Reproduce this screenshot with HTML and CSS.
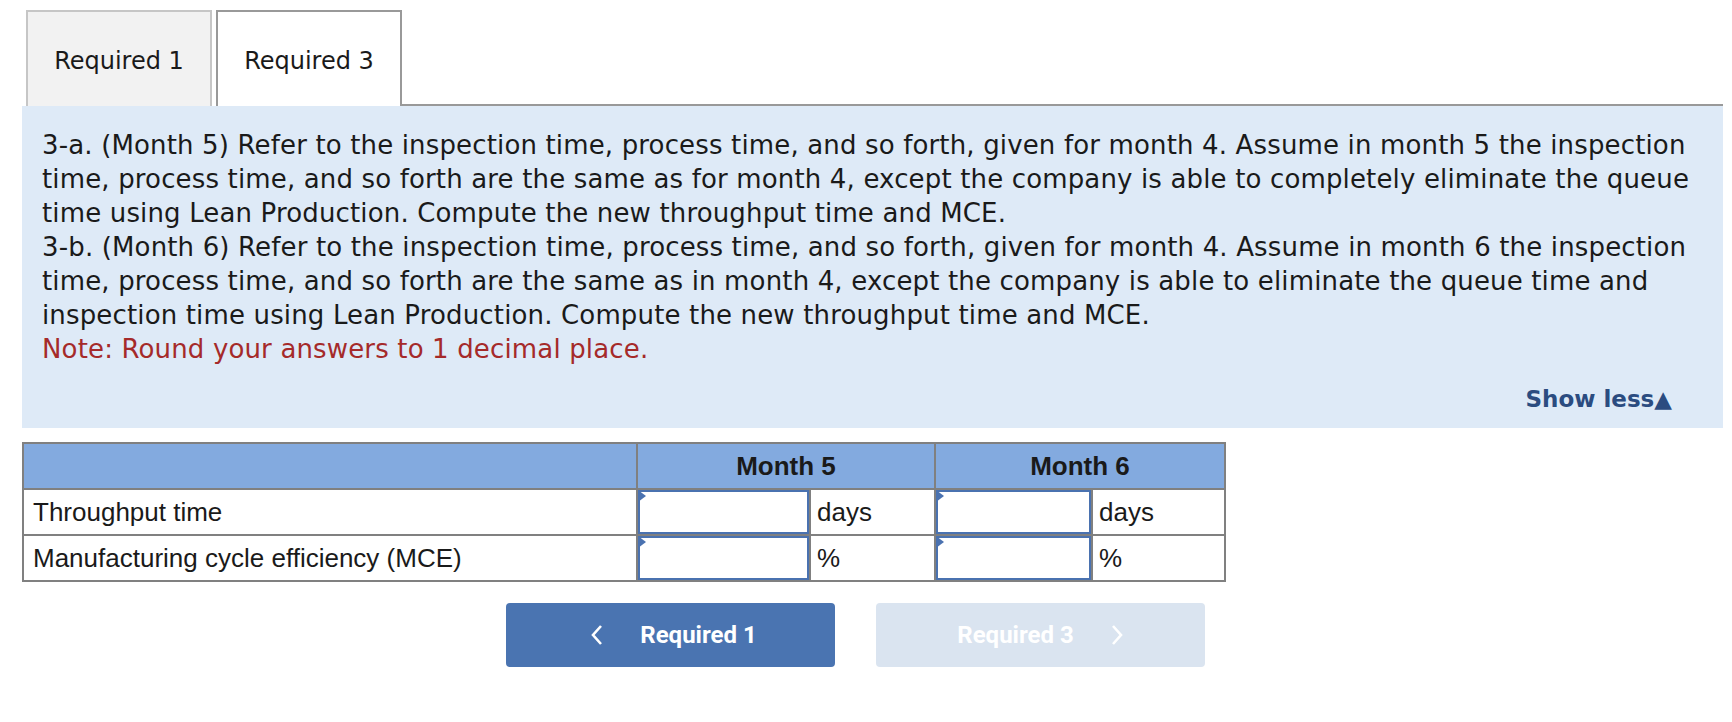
FILE: index.html
```html
<!DOCTYPE html>
<html lang="en">
<head>
    <meta charset="UTF-8">
    <title>Required 3</title>
    <link rel="stylesheet" href="styles.css">
</head>
<body>
    <div class="page">
        <div class="tabs">
            <div class="tab">Required 1</div>
            <div class="tab active">Required 3</div>
            <div class="tab-rest"></div>
        </div>

        <div class="panel">
            <p class="question">
                3-a. (Month 5) Refer to the inspection time, process time, and so forth, given for month 4. Assume in month 5 the inspection time, process time, and so forth are the same as for month 4, except the company is able to completely eliminate the queue time using Lean Production. Compute the new throughput time and MCE.<br>
                3-b. (Month 6) Refer to the inspection time, process time, and so forth, given for month 4. Assume in month 6 the inspection time, process time, and so forth are the same as in month 4, except the company is able to eliminate the queue time and inspection time using Lean Production. Compute the new throughput time and MCE.<br>
                <span class="note">Note: Round your answers to 1 decimal place.</span>
            </p>
            <div class="show-less">Show less&#9650;</div>
        </div>

        <table class="answers">
            <colgroup>
                <col class="c-label">
                <col class="c-in5">
                <col class="c-unit5">
                <col class="c-in6">
                <col class="c-unit6">
            </colgroup>
            <thead>
                <tr>
                    <th></th>
                    <th colspan="2">Month 5</th>
                    <th colspan="2">Month 6</th>
                </tr>
            </thead>
            <tbody>
                <tr>
                    <td class="label">Throughput time</td>
                    <td class="entry"><div class="field"><input type="text"></div></td>
                    <td class="unit">days</td>
                    <td class="entry"><div class="field"><input type="text"></div></td>
                    <td class="unit">days</td>
                </tr>
                <tr>
                    <td class="label">Manufacturing cycle efficiency (MCE)</td>
                    <td class="entry"><div class="field"><input type="text"></div></td>
                    <td class="unit">%</td>
                    <td class="entry"><div class="field"><input type="text"></div></td>
                    <td class="unit">%</td>
                </tr>
            </tbody>
        </table>

        <div class="nav">
            <button class="nav-btn prev">
                <svg width="14" height="22" viewBox="0 0 14 22"><polyline points="11,2 3,11 11,20" fill="none" stroke="#fff" stroke-width="2.6"/></svg>
                <span>Required 1</span>
            </button>
            <button class="nav-btn next" disabled>
                <span>Required 3</span>
                <svg width="14" height="22" viewBox="0 0 14 22"><polyline points="3,2 11,11 3,20" fill="none" stroke="#fff" stroke-width="2.6"/></svg>
            </button>
        </div>
    </div>
</body>
</html>
```

FILE: styles.css
```css
body {
    margin: 0;
    padding: 0;
    background-color: #ffffff;
    color: #1a1a1a;
    font-family: 'DejaVu Sans', Verdana, sans-serif;
}
.page {
    padding: 10px 9px 0 20px;
}

/* tabs */
.tabs {
    display: flex;
    margin-left: 6px;
    height: 96px;
}
.tab {
    width: 186px;
    box-sizing: border-box;
    border: 2px solid #c6c6c6;
    border-bottom: none;
    background-color: #f2f2f2;
    font-size: 24px;
    display: flex;
    align-items: center;
    justify-content: center;
    padding-top: 4px;
    margin-right: 4px;
}
.tab.active {
    background-color: #ffffff;
    border-color: #999999;
    margin-right: 0;
}
.tab-rest {
    flex: 1;
    border-bottom: 2px solid #999999;
    height: 94px;
}

/* question panel */
.panel {
    margin-left: 2px;
    background-color: #deeaf7;
    padding: 22px 18px 12px 20px;
}
.question {
    margin: 0;
    font-size: 26px;
    line-height: 34px;
    letter-spacing: 0.15px;
}
.note {
    color: #a52a2a;
}
.show-less {
    margin-top: 16px;
    text-align: right;
    padding-right: 33px;
    font-size: 23px;
    line-height: 34px;
    font-weight: bold;
    color: #2b4c80;
}

/* answer table */
.answers {
    margin-top: 14px;
    margin-left: 2px;
    border-collapse: collapse;
    font-family: 'Liberation Sans', Arial, sans-serif;
    font-size: 26px;
    color: #1a1a1a;
}
.c-label { width: 614px; }
.c-in5 { width: 173px; }
.c-unit5 { width: 125px; }
.c-in6 { width: 157px; }
.c-unit6 { width: 133px; }
.answers th, .answers td {
    border: 2px solid #808080;
    height: 44px;
    padding: 0;
}
.answers th {
    background-color: #83aadf;
    font-weight: bold;
    text-align: center;
}
.answers td.label {
    padding-left: 9px;
}
.answers td.unit {
    padding-left: 6px;
}
.field {
    position: relative;
    height: 44px;
}
.field::before {
    content: '';
    position: absolute;
    left: 0;
    top: 0;
    border-left: 8px solid #4a72b0;
    border-top: 6px solid transparent;
    border-bottom: 6px solid transparent;
}
.field input {
    display: block;
    width: 100%;
    height: 44px;
    box-sizing: border-box;
    border: 2px solid #4a72b0;
    margin: 0;
    padding: 0 6px;
    font-size: 22px;
    background: #ffffff;
    outline: none;
}

/* bottom navigation */
.nav {
    display: flex;
    gap: 41px;
    margin-top: 21px;
    margin-left: 486px;
}
.nav-btn {
    width: 329px;
    height: 64px;
    border: none;
    border-radius: 4px;
    display: flex;
    align-items: center;
    justify-content: center;
    gap: 36px;
    font-family: Roboto, 'Liberation Sans', sans-serif;
    font-weight: bold;
    font-size: 24px;
    color: #ffffff;
}
.nav-btn.prev {
    background-color: #4a74b1;
    padding-left: 12px;
}
.nav-btn.next {
    background-color: #dae4f0;
    padding-left: 6px;
}
```
